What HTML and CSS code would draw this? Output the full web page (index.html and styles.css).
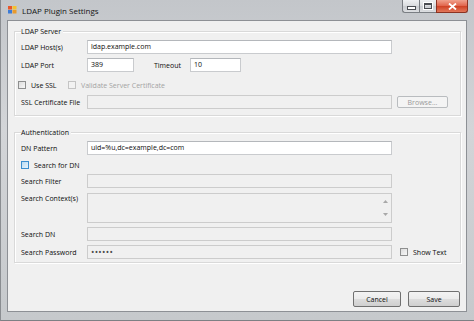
FILE: index.html
```html
<!DOCTYPE html>
<html>
<head>
    <title>LDAP Plugin Settings</title>
    <meta charset="UTF-8">
    <link rel="stylesheet" href="styles.css">
</head>
<body>
    <div class="window">
        <div class="titlebar">
            <svg class="app-icon" width="9" height="8" viewBox="0 0 9 8">
                <rect x="0" y="0" width="4" height="3.5" fill="#e8562a"/>
                <rect x="4.5" y="0" width="4" height="3.5" fill="#f5c12e"/>
                <rect x="0" y="4" width="4" height="3.5" fill="#3c7bd6"/>
                <rect x="4.5" y="4" width="4" height="3.5" fill="#e99a2c"/>
            </svg>
            <span class="title">LDAP Plugin Settings</span>
            <div class="caption-buttons">
                <div class="cap-btn min"><span class="min-glyph"></span></div>
                <div class="cap-btn max"><span class="max-glyph"></span></div>
                <div class="cap-btn close">
                    <svg width="9" height="7" viewBox="0 0 9 7"><path d="M1 0.5 L8 6.5 M8 0.5 L1 6.5" stroke="#fff" stroke-width="1.8"/></svg>
                </div>
            </div>
        </div>

        <div class="client">
            <div class="group server">
                <span class="group-title">LDAP Server</span>
                <div class="row">
                    <label>LDAP Host(s)</label>
                    <div class="textbox wide">ldap.example.com</div>
                </div>
                <div class="row gap4">
                    <label>LDAP Port</label>
                    <div class="textbox short">389</div>
                    <label class="timeout-label">Timeout</label>
                    <div class="textbox timeout">10</div>
                </div>
                <div class="row check-row gap6">
                    <div class="check-item ssl"><span class="checkbox"></span><span>Use SSL</span></div>
                    <div class="check-item disabled"><span class="checkbox off"></span><span>Validate Server Certificate</span></div>
                </div>
                <div class="row gap3">
                    <label>SSL Certificate File</label>
                    <div class="textbox wide disabled"></div>
                    <div class="button browse">Browse...</div>
                </div>
            </div>

            <div class="group auth">
                <span class="group-title">Authentication</span>
                <div class="row">
                    <label>DN Pattern</label>
                    <div class="textbox wide">uid=%u,dc=example,dc=com</div>
                </div>
                <div class="row gap3">
                    <div class="check-item"><span class="checkbox hover"></span><span>Search for DN</span></div>
                </div>
                <div class="row gap2">
                    <label>Search Filter</label>
                    <div class="textbox wide disabled"></div>
                </div>
                <div class="row multi-row gap5">
                    <label>Search Context(s)</label>
                    <div class="textbox wide multi disabled">
                        <div class="scroll-arrows">
                            <svg width="5" height="3" viewBox="0 0 5 3"><path d="M0 3 L2.5 0 L5 3Z" fill="#a8a8a8"/></svg>
                            <svg width="5" height="3" viewBox="0 0 5 3"><path d="M0 0 L2.5 3 L5 0Z" fill="#a8a8a8"/></svg>
                        </div>
                    </div>
                </div>
                <div class="row gap4">
                    <label>Search DN</label>
                    <div class="textbox wide disabled"></div>
                </div>
                <div class="row gap4">
                    <label>Search Password</label>
                    <div class="textbox wide disabled password">••••••</div>
                    <div class="check-item show-text"><span class="checkbox"></span><span>Show Text</span></div>
                </div>
            </div>

            <div class="actions">
                <div class="button cancel">Cancel</div>
                <div class="button save">Save</div>
            </div>
        </div>
    </div>
</body>
</html>
```

FILE: styles.css
```css
/* dialog frame */
body { margin: 0; font-family: "Open Sans", "Liberation Sans", sans-serif; font-size: 7px; color: #0c0c0c; }
.window { width: 474px; height: 321px; box-sizing: border-box; padding: 0 7px 8px 6px; display: flex; flex-direction: column; background: linear-gradient(to bottom, #c3c6ca, #d3d5d8 40%, #c6c9cc); border-left: 1px solid #8a8d91; border-bottom: 1px solid #7d8084; }
.titlebar { height: 20px; display: flex; align-items: center; flex-shrink: 0; position: relative; }
.app-icon { margin-left: 1px; margin-right: 5px; }
.title { font-size: 8px; color: #141414; }
.caption-buttons { position: absolute; right: -1px; top: 0; display: flex; }
.cap-btn { height: 13px; border: 1px solid #7a7e83; border-top: none; display: flex; align-items: center; justify-content: center; box-sizing: border-box; }
.cap-btn.min, .cap-btn.max { width: 17px; background: linear-gradient(to bottom, #eef0f2, #d9dbde 50%, #c9ccd0 51%, #dcdee1); border-right: none; }
.cap-btn.min { border-radius: 0 0 0 3px; }
.cap-btn.close { width: 32px; background: linear-gradient(to bottom, #f0a18d, #e0634a 50%, #cf4023 51%, #e2775a); border-radius: 0 0 3px 0; border-color: #8c3322; }
.min-glyph { width: 7px; height: 2px; background: #fff; border: 1px solid #4a4d52; margin-top: 4px; }
.max-glyph { width: 6px; height: 4px; border: 1px solid #4a4d52; box-shadow: inset 0 1px 0 #4a4d52, 0 0 0 1px #fff; }

/* client area */
.client { flex-grow: 1; background: #f0f0f0; border: 1px solid #8d9095; padding: 10px 5px 4px 6px; display: flex; flex-direction: column; }
.group { position: relative; border: 1px solid #d9d9d9; box-shadow: inset 1px 1px 0 #fff, 1px 1px 0 #fff; padding: 8px 6px 6px 6px; }
.group.auth { margin-top: 16px; padding-bottom: 3px; }
.group-title { position: absolute; left: 6px; top: -5px; line-height: 10px; background: #f0f0f0; padding-right: 2px; }

.row { display: flex; align-items: center; height: 14px; }
.row label { width: 66px; flex-shrink: 0; }
.gap2 { margin-top: 2px; }
.gap3 { margin-top: 3px; }
.gap4 { margin-top: 4px; }
.gap5 { margin-top: 5px; }
.gap6 { margin-top: 6px; }

.textbox { height: 14px; box-sizing: border-box; border: 1px solid #c9cbce; border-top-color: #b4b7bb; background: #fff; padding: 0 3px; line-height: 12px; white-space: nowrap; }
.textbox.wide { width: 305px; }
.textbox.short { width: 47px; }
.textbox.timeout { width: 51px; }
.textbox.disabled { background: #f0f0f0; border-color: #cccccc; }
.textbox.password { color: #4a4a4a; letter-spacing: 0.3px; font-size: 9px; }
.row .timeout-label { width: 36px; margin-left: 20px; }

.multi-row { height: 30px; align-items: flex-start; }
.multi-row label { padding-top: 1px; }
.textbox.multi { height: 30px; display: flex; justify-content: flex-end; padding: 0; }
.scroll-arrows { width: 11px; display: flex; flex-direction: column; align-items: center; justify-content: space-between; padding: 6px 0 6px; }

/* checkboxes */
.check-row { margin-left: -3px; }
.check-item { display: flex; align-items: center; gap: 5px; }
.check-item.ssl { width: 50px; }
.check-item.disabled { color: #a3a3a3; }
.checkbox { width: 8px; height: 8px; box-sizing: border-box; border: 1px solid #8e8f8f; background: linear-gradient(135deg, #dcdcdc, #f7f7f7); flex-shrink: 0; }
.checkbox.off { border-color: #c4c4c4; background: #f2f2f2; }
.checkbox.hover { border-color: #3d8fcf; background: linear-gradient(135deg, #b9dbf3, #e7f4fc); }
.check-item.show-text { margin-left: 8px; }

/* buttons */
.button { box-sizing: border-box; display: flex; align-items: center; justify-content: center; border: 1px solid #707070; border-radius: 2px; background: linear-gradient(to bottom, #f3f3f3, #ebebeb 50%, #dddddd 51%, #cfcfcf); }
.button.browse { width: 51px; height: 12px; margin-left: 5px; border-color: #b9bcbf; background: #f4f4f4; color: #9a9a9a; }
.actions { margin-top: auto; display: flex; justify-content: flex-end; gap: 7px; padding-right: 1px; }
.button.cancel { width: 48px; height: 16px; }
.button.save { width: 52px; height: 16px; }
```
